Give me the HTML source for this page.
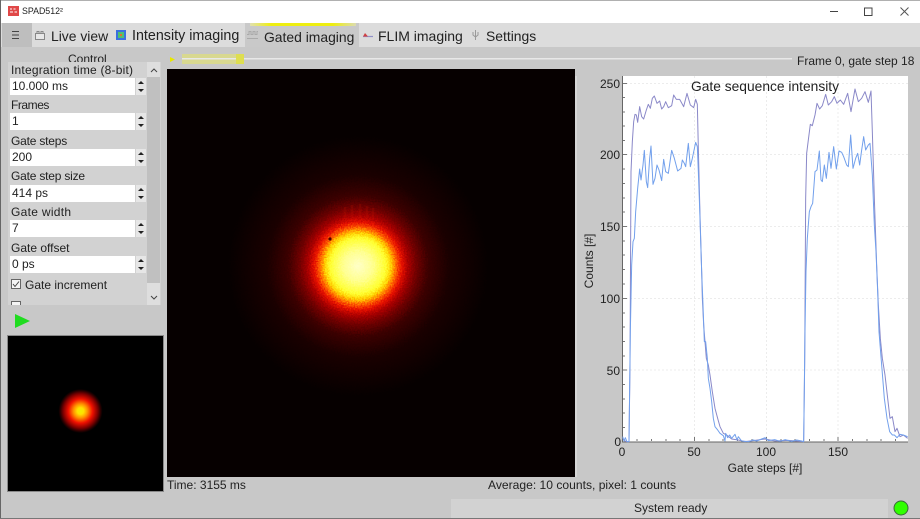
<!DOCTYPE html>
<html><head><meta charset="utf-8"><title>SPAD512²</title>
<style>
html,body{margin:0;padding:0;background:#c8c8c8;}
#r{position:relative;width:920px;height:519px;overflow:hidden;background:#c8c8c8;font-family:"Liberation Sans",sans-serif;color:#222;filter:blur(.3px);}
#r div{position:absolute;box-sizing:border-box;}
.t{white-space:nowrap;line-height:16px;height:16px;}
.l{font-size:12px;left:11px;}
.i{left:10px;width:125px;height:17px;background:#fff;font-size:12px;line-height:17px;padding-left:2px;color:#222;}
.s{left:136px;width:10px;height:17px;background:#e6e6e6;}
.s:before{content:"";position:absolute;left:2px;top:3px;border:3px solid transparent;border-top:0;border-bottom:3px solid #222;}
.s:after{content:"";position:absolute;left:2px;bottom:3px;border:3px solid transparent;border-bottom:0;border-top:3px solid #222;}
.tab{font-size:14px;top:28px;}
</style></head><body>
<div id="r">
<div style="left:0;top:0;width:920px;height:1px;background:#b0b0b0"></div>
<div style="left:0;top:1px;width:920px;height:22px;background:#fff"></div>
<div style="left:0;top:23px;width:920px;height:24px;background:#dcdcdc"></div>
<div style="left:2px;top:23px;width:30px;height:24px;background:#bebebe"></div>
<div style="left:245px;top:23px;width:114px;height:24px;background:#c9c9c9"></div>
<div style="left:250px;top:23px;width:106px;height:3px;background:linear-gradient(90deg,#e0e0b0,#eeee10 20%,#eeee10 78%,#dcdcb0)"></div>

<div style="left:8px;top:6px;width:11px;height:10px;background:#e04848"></div>
<div class="t" style="left:22px;top:3px;font-size:8.8px">SPAD512²</div>
<div class="t tab" style="left:51px;font-size:13.9px">Live view</div>
<div class="t tab" style="left:132px;font-size:14.3px">Intensity imaging</div>
<div class="t tab" style="left:264px;top:29px;font-size:13.9px">Gated imaging</div>
<div class="t tab" style="left:378px">FLIM imaging</div>
<div class="t tab" style="left:486px;font-size:13.9px">Settings</div>

<div class="t" style="left:68px;top:52px;font-size:12px;height:10px;overflow:hidden;line-height:14px">Control</div>
<div style="left:8px;top:62px;width:153px;height:243px;background:#d2d2d2"></div>
<div class="t l" style="top:62px;letter-spacing:.2px">Integration time (8-bit)</div>
<div class="i" style="top:78px">10.000 ms</div><div class="s" style="top:78px"></div>
<div class="t l" style="top:97px;letter-spacing:-.45px">Frames</div>
<div class="i" style="top:113px">1</div><div class="s" style="top:113px"></div>
<div class="t l" style="top:133px;letter-spacing:-.2px">Gate steps</div>
<div class="i" style="top:149px">200</div><div class="s" style="top:149px"></div>
<div class="t l" style="top:168px;letter-spacing:-.2px">Gate step size</div>
<div class="i" style="top:185px">414 ps</div><div class="s" style="top:185px"></div>
<div class="t l" style="top:204px;letter-spacing:.3px">Gate width</div>
<div class="i" style="top:220px">7</div><div class="s" style="top:220px"></div>
<div class="t l" style="top:240px">Gate offset</div>
<div class="i" style="top:256px">0 ps</div><div class="s" style="top:256px"></div>
<div style="left:11px;top:279px;width:10px;height:10px;background:#f4f4f4;border:1px solid #666"></div>
<div class="t l" style="left:25px;top:277px">Gate increment</div>
<div style="left:11px;top:301px;width:10px;height:4px;background:#f4f4f4;border:1px solid #666;border-bottom:0"></div>
<div style="left:147px;top:62px;width:13px;height:243px;background:#c0c0c0"></div>
<div style="left:147px;top:62px;width:13px;height:15px;background:#dedede"></div>
<div style="left:147px;top:283px;width:13px;height:22px;background:#dedede"></div>

<div style="left:167px;top:69px;width:408px;height:408px;background:#060000;overflow:hidden"></div>
<div style="left:7px;top:335px;width:157px;height:157px;background:#000;border:1px solid #888"></div>
<div style="left:575px;top:76px;width:2px;height:401px;background:#d6d6d6"></div>

<svg style="position:absolute;left:0;top:0" width="920" height="519" viewBox="0 0 920 519" font-family="Liberation Sans, sans-serif" fill="#222">
<defs>
<radialGradient id="h" gradientUnits="userSpaceOnUse" cx="358" cy="266" r="130">
<stop offset="0" stop-color="#ffffc8"/><stop offset=".115" stop-color="#ffff90"/><stop offset=".215" stop-color="#ffff30"/>
<stop offset=".255" stop-color="#ffd000"/><stop offset=".295" stop-color="#ff6000"/><stop offset=".335" stop-color="#e81000"/>
<stop offset=".385" stop-color="#a80000"/><stop offset=".45" stop-color="#700000"/><stop offset=".54" stop-color="#3c0000"/>
<stop offset=".7" stop-color="#1a0000"/><stop offset="1" stop-color="#060000"/>
</radialGradient>
<radialGradient id="h2" gradientUnits="userSpaceOnUse" cx="80.500" cy="411" r="22">
<stop offset="0" stop-color="#f0f000"/><stop offset=".15" stop-color="#ffe000"/><stop offset=".32" stop-color="#ff9000"/>
<stop offset=".55" stop-color="#f01000"/><stop offset=".78" stop-color="#800000"/><stop offset=".92" stop-color="#280000"/>
<stop offset="1" stop-color="#000"/>
</radialGradient>
<filter id="n" x="0" y="0" width="100%" height="100%" filterUnits="objectBoundingBox" color-interpolation-filters="sRGB">
<feTurbulence type="fractalNoise" baseFrequency="0.7" numOctaves="2" seed="4"/>
<feDisplacementMap in="SourceGraphic" scale="9" xChannelSelector="R" yChannelSelector="G"/>
</filter>
</defs>
<rect x="228" y="136" width="260" height="260" fill="url(#h)" filter="url(#n)"/>
<path d="M345 207v12M352 205v12M360 204v14M367 206v12M373 208v10" stroke="#e02000" stroke-width="2.500" opacity=".14"/>
<circle cx="330" cy="239" r="1.600" fill="#500000"/>
<rect x="58" y="389" width="45" height="44" fill="url(#h2)"/>

<!-- hamburger -->
<path d="M12 31.500h7M12 35h7M12 38.500h7" stroke="#444" stroke-width="1" fill="none"/>
<!-- camera -->
<path d="M35.500 33.500h9v6h-9zM37 33.500v-2h2v2M41 33.500v-2h2v2" stroke="#888" stroke-width="1" fill="#e8e8e8"/>
<!-- intensity -->
<rect x="116" y="30" width="10" height="10" fill="#3a70e0"/><rect x="118" y="32" width="6" height="6" fill="#50c070"/><rect x="120" y="34" width="2" height="2" fill="#e07030"/>
<!-- gated -->
<path d="M247 34.500h2v-3h2v3h2v-3h2v3h2v-3h1M247 38.500h11" stroke="#aaa" stroke-width="1" fill="none"/>
<!-- flim -->
<path d="M363 36.500h10" stroke="#9090c8" stroke-width="1.200"/><path d="M365 33l3 3.500h-5z" fill="#d04040"/>
<!-- settings -->
<path d="M475.500 30v10M473 32v3l2.500 2 2.500-2v-3" stroke="#999" stroke-width="1" fill="none"/>
<!-- title logo marks -->
<path d="M10 9h2M13.500 9h2M10 12h3M14.500 12h2.500" stroke="#fff" stroke-width="1" fill="none"/>
<!-- window buttons -->
<path d="M830 11.500h8" stroke="#444" stroke-width="1"/>
<rect x="864.500" y="8" width="7.500" height="7.500" fill="none" stroke="#444" stroke-width="1"/>
<path d="M900.500 7.500l8 8M908.500 7.500l-8 8" stroke="#555" stroke-width="1" fill="none"/>
<!-- scroll arrows -->
<path d="M151 72l3-3 3 3M151 296l3 3 3-3" stroke="#444" stroke-width="1" fill="none"/>
<!-- checkbox tick -->
<path d="M13 284l2 2.500 4-5" stroke="#444" stroke-width="1" fill="none"/>
<!-- play -->
<path d="M15 314l15 7-15 7z" fill="#20dc20"/>
<!-- slider -->
<path d="M170 57l5 2.500-5 2.500z" fill="#e8e800"/>
<rect x="182" y="54" width="58" height="10" fill="#d8d890"/>
<rect x="182" y="58" width="610" height="1.500" fill="#e8e8e8"/>
<rect x="236" y="54" width="8" height="10" fill="#dede50"/>

<!-- chart -->
<rect x="622" y="76" width="286" height="366" fill="#fff"/>
<path d="M694.500 76V441M766.500 76V441M838 76V441M622 83.500H908M622 154.500H908M622 226.500H908M622 298.500H908M622 370H908" stroke="#ececec" stroke-width="1" stroke-dasharray="2 2" fill="none"/>
<path d="M622.500 76V442H908" stroke="#666" stroke-width="1" fill="none"/>
<path d="M623 83.500h4M623 154.500h4M623 226.500h4M623 298.500h4M623 370h4M623 97.500h2M623 112h2M623 126h2M623 140.500h2M623 169h2M623 183.500h2M623 198h2M623 212h2M623 241h2M623 255h2M623 269.500h2M623 284h2M623 313h2M623 327h2M623 341.500h2M623 356h2M623 384.500h2M623 399h2M623 413h2M623 427.500h2M694.500 441v-4M766.500 441v-4M838 441v-4M637 441v-2M651.500 441v-2M666 441v-2M680 441v-2M709 441v-2M723 441v-2M737.500 441v-2M752 441v-2M781 441v-2M795 441v-2M809.500 441v-2M824 441v-2M852.500 441v-2M867 441v-2M881 441v-2M895.500 441v-2" stroke="#777" stroke-width="1" fill="none"/>
<g transform="translate(575 65) scale(.33333)" fill="none" stroke-linejoin="round">
<path stroke="#8a88c8" stroke-width="3" d="M143 1120L150 1128L156 1130L162 1130L165 900L168 320L172 230L176 170L180 148L184 150L188 172L194 125L200 155L206 162L214 135L220 118L226 130L232 100L238 93L246 115L254 108L260 132L266 125L272 110L280 128L290 122L296 90L304 103L314 103L326 125L336 85L346 120L356 128L362 103L367 118L370 250L375 450L380 620L382 700L386 780L390 830L394 880L400 900L405 930L412 980L420 1030L428 1060L435 1085L445 1105L455 1110L470 1122L490 1125L510 1130L540 1126L570 1122L600 1128L640 1126L686 1130L689 900L692 400L695 265L700 225L706 178L712 182L720 150L726 115L734 132L742 122L752 88L760 120L770 110L778 95L786 115L796 105L806 118L818 85L828 140L840 72L850 110L860 100L870 80L880 112L888 78L892 200L898 400L905 600L910 720L916 820L922 880L930 930L938 1000L945 1060L952 1055L960 1100L966 1090L975 1115L985 1110L998 1120"/>
<path stroke="#72a0ec" stroke-width="3" d="M143 1115L147 1128L151 1118L156 1130L162 1130L166 800L170 600L174 530L178 520L182 440L188 370L194 312L198 345L204 300L208 256L214 350L218 368L224 280L228 243L234 358L240 340L246 300L252 315L260 347L266 283L272 320L280 325L290 256L298 280L308 318L318 310L322 285L328 295L332 305L340 235L346 305L352 280L362 232L367 245L370 320L374 430L380 620L384 720L388 830L392 830L397 880L400 940L405 970L410 1010L415 1060L420 1085L428 1095L435 1105L445 1112L450 1128L452 1105L458 1118L464 1110L470 1120L480 1108L486 1125L490 1115L500 1128L520 1130L535 1125L545 1128L560 1122L570 1118L580 1127L600 1124L615 1129L630 1124L650 1129L665 1125L680 1128L686 1130L690 800L693 620L697 520L703 440L708 425L713 415L720 320L726 315L733 258L738 345L742 350L748 300L754 340L762 262L768 310L776 245L784 312L792 258L800 262L806 275L815 300L820 305L827 210L834 310L842 280L848 265L854 300L860 255L866 215L872 255L880 240L885 235L892 330L898 480L903 560L908 680L912 800L920 900L928 1000L936 1060L944 1100L952 1110L958 1110L966 1118L975 1108L985 1110L998 1115"/>
</g>
<g font-size="12" text-anchor="end">
<text x="620" y="88">250</text><text x="620" y="159">200</text><text x="620" y="231">150</text><text x="620" y="303">100</text><text x="620" y="375">50</text>
</g>
<text x="621" y="446" font-size="12" text-anchor="end">0</text>
<g font-size="12" text-anchor="middle">
<text x="622" y="456">0</text><text x="694" y="456">50</text><text x="766" y="456">100</text><text x="838" y="456">150</text>
<text x="765" y="472">Gate steps [#]</text>
<text transform="translate(593 261) rotate(-90)">Counts [#]</text>
</g>
<text x="765" y="91" font-size="13.8" text-anchor="middle">Gate sequence intensity</text>

<!-- status -->
<circle cx="901" cy="508" r="7" fill="#30ff00" stroke="#3a6a3a" stroke-width="1"/>
</svg>

<div class="t" style="left:797px;top:53px;font-size:12px">Frame 0, gate step 18</div>
<div class="t" style="left:167px;top:477px;font-size:12px">Time: 3155 ms</div>
<div class="t" style="left:488px;top:477px;font-size:12.100px">Average: 10 counts, pixel: 1 counts</div>
<div style="left:451px;top:499px;width:437px;height:19px;background:#d2d2d2"></div>
<div class="t" style="left:634px;top:500px;font-size:12px">System ready</div>
<div style="left:0;top:0;width:1px;height:519px;background:#666"></div>
<div style="left:0;top:518px;width:920px;height:1px;background:#777"></div>
</div>
</body></html>
